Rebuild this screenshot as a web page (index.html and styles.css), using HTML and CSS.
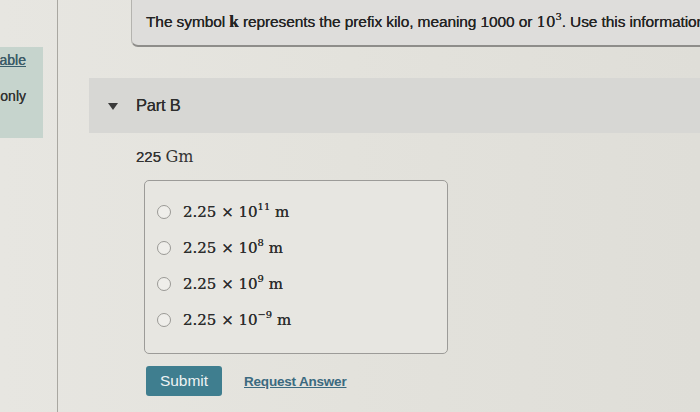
FILE: index.html
```html
<!DOCTYPE html>
<html>
<head>
<meta charset="utf-8">
<link rel="stylesheet" href="styles.css">
</head>
<body>
<div class="page">
  <div class="sidebar">
    <div class="side-panel">
      <a class="side-link">able</a>
      <span class="side-text">only</span>
    </div>
  </div>
  <div class="divider"></div>
  <div class="main">
    <div class="intro">
      <p>The symbol <span class="math-k">k</span> represents the prefix kilo, meaning 1000 or <span class="math">10<sup>3</sup></span>. Use this information</p>
    </div>
    <div class="part-bar">
      <span class="caret"></span>
      <span class="part-title">Part B</span>
    </div>
    <div class="part-body">
      <p class="question"><span class="num">225</span> <span class="math">Gm</span></p>
      <div class="options">
        <label class="option"><span class="radio"></span><span class="math">2.25 × 10<sup>11</sup> m</span></label>
        <label class="option"><span class="radio"></span><span class="math">2.25 × 10<sup>8</sup> m</span></label>
        <label class="option"><span class="radio"></span><span class="math">2.25 × 10<sup>9</sup> m</span></label>
        <label class="option"><span class="radio"></span><span class="math">2.25 × 10<sup>−9</sup> m</span></label>
      </div>
      <div class="actions">
        <button class="submit">Submit</button>
        <a class="request">Request Answer</a>
      </div>
    </div>
  </div>
</div>
</body>
</html>
```
FILE: styles.css
```css
html, body {
  margin: 0;
  padding: 0;
}
body {
  width: 700px;
  height: 412px;
  overflow: hidden;
  background: linear-gradient(90deg, #e7e6e1 0%, #e3e2dc 50%, #dfded8 100%);
  font-family: "Liberation Sans", Arial, sans-serif;
  color: #2b2b2b;
}
.page {
  display: flex;
  height: 412px;
}
.sidebar {
  width: 43px;
  flex: none;
}
.side-panel {
  margin-top: 47px;
  height: 91px;
  background: #c6d4cd;
  display: flex;
  flex-direction: column;
  align-items: flex-end;
  padding-right: 17px;
  box-sizing: border-box;
  font-size: 14px;
  text-shadow: 0 0 0.5px #333;
}
.side-link {
  margin-top: 5px;
  color: #3a5f6e;
  text-decoration: underline;
}
.side-text {
  margin-top: 20px;
  color: #333;
}
.divider {
  width: 1px;
  margin-left: 14px;
  background: #a9a7a1;
  flex: none;
}
.main {
  flex: 1;
  min-width: 0;
}
.intro {
  margin-left: 73px;
  height: 47px;
  background: #dedddb;
  border-left: 1px solid #b4b3af;
  border-bottom: 2px solid #8e8d8a;
  border-bottom-left-radius: 7px;
  box-sizing: border-box;
  padding-left: 14px;
  white-space: nowrap;
  overflow: hidden;
}
.intro p {
  margin: 0;
  padding-top: 12px;
  font-size: 15.5px;
  letter-spacing: -0.1px;
  color: #242424;
  text-shadow: 0 0 0.6px #242424;
}
.math-k {
  font-family: "Liberation Serif", "Times New Roman", serif;
  font-size: 17px;
  font-weight: bold;
}
.math {
  font-family: "DejaVu Serif", "Liberation Serif", serif;
}
.intro .math {
  font-size: 15px;
}
sup {
  font-size: 0.66em;
  line-height: 0;
  position: relative;
  top: -0.1em;
}
.part-bar {
  margin-top: 31px;
  margin-left: 31px;
  height: 55px;
  background: #d7d7d4;
  display: flex;
  align-items: center;
  padding-left: 19px;
}
.caret {
  width: 0;
  height: 0;
  border-left: 5px solid transparent;
  border-right: 5px solid transparent;
  border-top: 7px solid #3a3a3a;
  margin-top: 1px;
}
.part-title {
  margin-left: 18px;
  font-size: 16.5px;
  color: #2d2d2d;
  letter-spacing: -0.2px;
  text-shadow: 0 0 0.6px #2d2d2d;
}
.part-body {
  padding-left: 78px;
}
.question {
  margin: 14px 0 0 0;
  font-size: 16px;
  color: #333;
  height: 20px;
}
.question .num {
  font-family: "Liberation Sans", Arial, sans-serif;
  font-size: 15px;
  text-shadow: 0 0 0.5px #333;
}
.question .math {
  font-size: 16px;
}
.options {
  margin-top: 13px;
  margin-left: 8px;
  width: 304px;
  height: 174px;
  box-sizing: border-box;
  border: 1.5px solid #9c9b98;
  border-radius: 5px;
  background: #e7e6e1;
  padding: 21px 0 0 12px;
  display: flex;
  flex-direction: column;
  gap: 16px;
}
.option {
  display: flex;
  align-items: center;
  height: 20px;
  font-size: 15px;
  color: #2e2e2e;
}
.option .math {
  text-shadow: 0 0 0.6px #2e2e2e;
}
.radio {
  width: 14px;
  height: 14px;
  border: 1.5px solid #9a9995;
  border-radius: 50%;
  box-sizing: border-box;
  background: #efeeea;
  margin-right: 12px;
  flex: none;
}
.actions {
  margin-top: 12px;
  margin-left: 10px;
  display: flex;
  align-items: center;
}
.submit {
  width: 76px;
  height: 30px;
  border: none;
  border-radius: 3px;
  background: #3f7e8f;
  color: #eef3f4;
  font-family: "Liberation Sans", Arial, sans-serif;
  font-size: 15.5px;
  padding: 0;
}
.request {
  margin-left: 22px;
  color: #3b6a80;
  font-size: 13.5px;
  font-weight: bold;
  text-decoration: underline;
  letter-spacing: -0.2px;
}
```
